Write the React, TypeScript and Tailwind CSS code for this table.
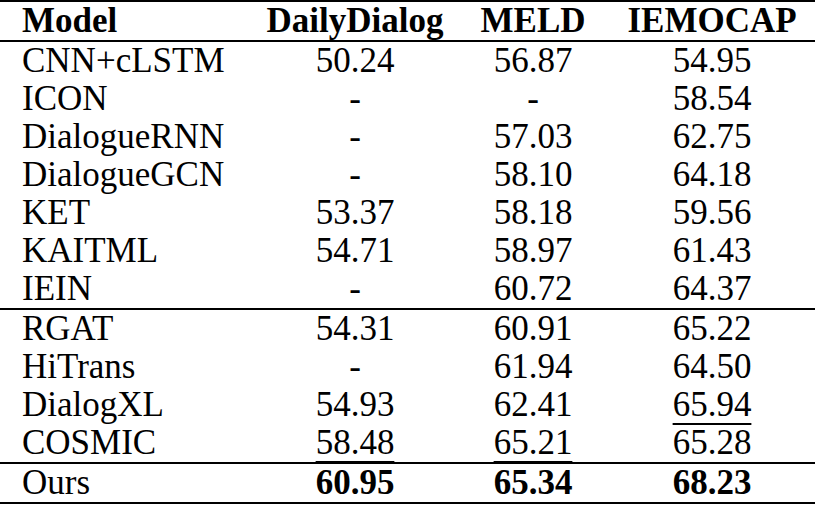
const ROWS_A = [
  ["CNN+cLSTM", "50.24", "56.87", "54.95"],
  ["ICON", "-", "-", "58.54"],
  ["DialogueRNN", "-", "57.03", "62.75"],
  ["DialogueGCN", "-", "58.10", "64.18"],
  ["KET", "53.37", "58.18", "59.56"],
  ["KAITML", "54.71", "58.97", "61.43"],
  ["IEIN", "-", "60.72", "64.37"],
];

const ROWS_B = [
  ["RGAT", "54.31", "60.91", "65.22"],
  ["HiTrans", "-", "61.94", "64.50"],
  ["DialogXL", "54.93", "62.41", "65.94"],
  ["COSMIC", "58.48", "65.21", "65.28"],
];

// second-best scores get an underline
const UNDERLINED = new Set(["COSMIC-1", "COSMIC-2", "DialogXL-3"]);

const GRID = "grid grid-cols-[260px_190px_166px_192px] h-[38px] items-center";

function Rule() {
  return <div className="h-[2px] w-[815px] bg-black" />;
}

function Row({ cells, bold = false }: { cells: string[]; bold?: boolean }) {
  return (
    <div className={GRID}>
      {cells.map((c, i) => (
        <div
          key={i}
          className={`${i === 0 ? "pl-[22px] text-left font-normal" : "text-center"} ${
            bold && i > 0 ? "font-bold" : ""
          }`}
        >
          <span
            className={
              UNDERLINED.has(`${cells[0]}-${i}`)
                ? "underline decoration-[1.5px] underline-offset-[7px]"
                : ""
            }
          >
            {c}
          </span>
        </div>
      ))}
    </div>
  );
}

export default function App() {
  return (
    <div className="w-[818px] h-[505px] bg-white text-black font-['Liberation_Serif',serif] text-[35px] leading-[38px]">
      <Rule />
      <div className={`${GRID} font-bold`}>
        <div className="pl-[22px]">Model</div>
        <div className="text-center">DailyDialog</div>
        <div className="text-center">MELD</div>
        <div className="text-center">IEMOCAP</div>
      </div>
      <Rule />
      {ROWS_A.map((r) => (
        <Row key={r[0]} cells={r} />
      ))}
      <Rule />
      {ROWS_B.map((r) => (
        <Row key={r[0]} cells={r} />
      ))}
      <Rule />
      <Row cells={["Ours", "60.95", "65.34", "68.23"]} bold />
      <Rule />
    </div>
  );
}
